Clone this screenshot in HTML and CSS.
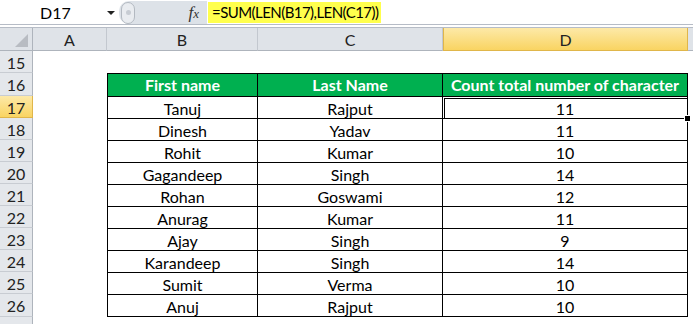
FILE: index.html
```html
<!DOCTYPE html>
<html lang="en">

<head>
    <meta charset="UTF-8">
    <title>Count characters - LEN</title>
    <link rel="stylesheet" href="styles.css">
</head>

<body>

    <div class="formula-bar">
        <div class="name-box">
            <span class="cell-ref">D17</span>
            <span class="drop"></span>
        </div>
        <div class="bar-tools">
            <span class="splitter"><span class="dot"></span></span>
            <span class="fx"><i>f</i><i class="x">x</i></span>
        </div>
        <div class="formula">
            <span class="formula-text">=SUM(LEN(B17),LEN(C17))</span>
        </div>
    </div>

    <div class="sheet top-sheet">
        <div class="colhead corner"><span class="tri"></span></div>
        <div class="colhead">A</div>
        <div class="colhead">B</div>
        <div class="colhead">C</div>
        <div class="colhead selected">D</div>
        <div class="colhead last"></div>

        <div class="rowhead">15</div>
        <div class="blank"></div><div class="blank"></div><div class="blank"></div><div class="blank"></div><div class="blank"></div>
    </div>

    <div class="sheet data-sheet" id="rows"></div>

    <script>
        const people = [
            ["Tanuj", "Rajput"],
            ["Dinesh", "Yadav"],
            ["Rohit", "Kumar"],
            ["Gagandeep", "Singh"],
            ["Rohan", "Goswami"],
            ["Anurag", "Kumar"],
            ["Ajay", "Singh"],
            ["Karandeep", "Singh"],
            ["Sumit", "Verma"],
            ["Anuj", "Rajput"]
        ];

        const rows = document.getElementById("rows");
        let html = '<div class="rowhead">16</div><div class="blank"></div>' +
            '<div class="cell head first">First name</div>' +
            '<div class="cell head">Last Name</div>' +
            '<div class="cell head">Count total number of character</div>' +
            '<div class="blank"></div>';

        people.forEach((p, i) => {
            const row = 17 + i;
            const last = i === people.length - 1 ? " end" : "";
            const sel = row === 17 ? " selected" : "";
            const active = row === 17 ? " active" : "";
            html += '<div class="rowhead' + sel + '">' + row + '</div><div class="blank"></div>' +
                '<div class="cell first' + last + '">' + p[0] + '</div>' +
                '<div class="cell' + last + '">' + p[1] + '</div>' +
                '<div class="cell' + last + active + '">' + (p[0].length + p[1].length) + '</div>' +
                '<div class="blank"></div>';
        });

        html += '<div class="rowhead">27</div>';
        rows.innerHTML = html;
    </script>

</body>

</html>
```

FILE: styles.css
```css
body {
    margin: 0;
    padding: 0;
    background: #ffffff;
    font-family: Lato, "Liberation Sans", sans-serif;
    color: #000;
    overflow: hidden;
}

.formula-bar {
    display: flex;
    height: 24px;
    border-bottom: 1px solid #b6bcc6;
    background: #ffffff;
}

.name-box {
    width: 119px;
    display: flex;
    align-items: center;
    position: relative;
}

.cell-ref {
    font-size: 16px;
    margin-left: 40px;
}

.drop {
    position: absolute;
    left: 107px;
    top: 11px;
    border-left: 4px solid transparent;
    border-right: 4px solid transparent;
    border-top: 4px solid #222;
}

.bar-tools {
    width: 88px;
    background: #dde2e8;
    display: flex;
    align-items: center;
    justify-content: space-between;
    border-radius: 10px 0 0 10px;
    margin: 1px 0 0 0;
}

.splitter {
    width: 12px;
    height: 20px;
    margin-left: 2px;
    border-radius: 8px;
    border: 1px solid #b3b9c1;
    background: #e9ecf0;
    display: flex;
    align-items: center;
    justify-content: center;
}

.splitter .dot {
    width: 5px;
    height: 5px;
    border-radius: 3px;
    background: #c7ccd3;
}

.fx {
    font-family: "Liberation Serif", serif;
    font-size: 17px;
    color: #333;
    margin-right: 8px;
}

.fx .x {
    font-size: 13px;
}

.formula {
    flex: 1;
    display: flex;
    align-items: center;
    padding-left: 1px;
}

.formula-text {
    background: #ffff4d;
    font-size: 15px;
    letter-spacing: -0.55px;
    line-height: 21px;
    padding: 0 3px 0 4px;
}

.sheet {
    display: grid;
    grid-template-columns: 33px 74px 151px 185px 245px 1fr;
}

.top-sheet {
    margin-top: 2px;
    border-top: 1px solid #b6bcc6;
    grid-template-rows: 23px 22px;
}

.data-sheet {
    grid-template-rows: 23px repeat(9, 22px) 23px 22px;
}

.colhead {
    background: #dfe3e8;
    border-right: 1px solid #c3c8cf;
    border-bottom: 1px solid #aeb4bc;
    box-sizing: border-box;
    display: flex;
    align-items: center;
    justify-content: center;
    font-family: Lato, sans-serif;
    font-size: 16px;
    color: #222;
}

.colhead.last {
    border-right: none;
}

.colhead.selected {
    background: linear-gradient(to bottom, #fde9a8, #f9d462);
    border: 1px solid #e0b64a;
    border-top: none;
}

.corner {
    position: relative;
    border-right-color: #aeb4bc;
}

.tri {
    position: absolute;
    right: 4px;
    bottom: 3px;
    border-left: 13px solid transparent;
    border-bottom: 13px solid #b8bcc2;
}

.rowhead {
    background: #e4e7eb;
    border-right: 1px solid #aeb4bc;
    border-bottom: 1px solid #c8ccd2;
    box-sizing: border-box;
    display: flex;
    align-items: center;
    justify-content: center;
    padding-top: 1px;
    font-size: 16px;
    color: #222;
}

.rowhead.selected {
    background: linear-gradient(to bottom, #fde9a8, #f9d462);
    border-right-color: #e0b64a;
    border-bottom-color: #e0b64a;
}

.blank {
    background: #ffffff;
}

.cell {
    border-top: 1px solid #000;
    border-right: 1px solid #000;
    box-sizing: border-box;
    text-align: center;
    font-size: 16px;
    line-height: 21px;
    padding-top: 1px;
    position: relative;
}

.cell.first {
    border-left: 1px solid #000;
}

.cell.end {
    border-bottom: 1px solid #000;
}

.cell.head {
    background: #00b050;
    color: #ffffff;
    font-weight: bold;
    line-height: 22px;
    padding-top: 0;
}

.cell.active::after {
    content: "";
    position: absolute;
    left: 1px;
    top: 1px;
    right: -1px;
    bottom: -1px;
    border: 1px solid #000;
}

.cell.active::before {
    content: "";
    position: absolute;
    right: -4px;
    bottom: -4px;
    width: 5px;
    height: 5px;
    background: #000;
    border: 1px solid #fff;
    z-index: 2;
}
```
